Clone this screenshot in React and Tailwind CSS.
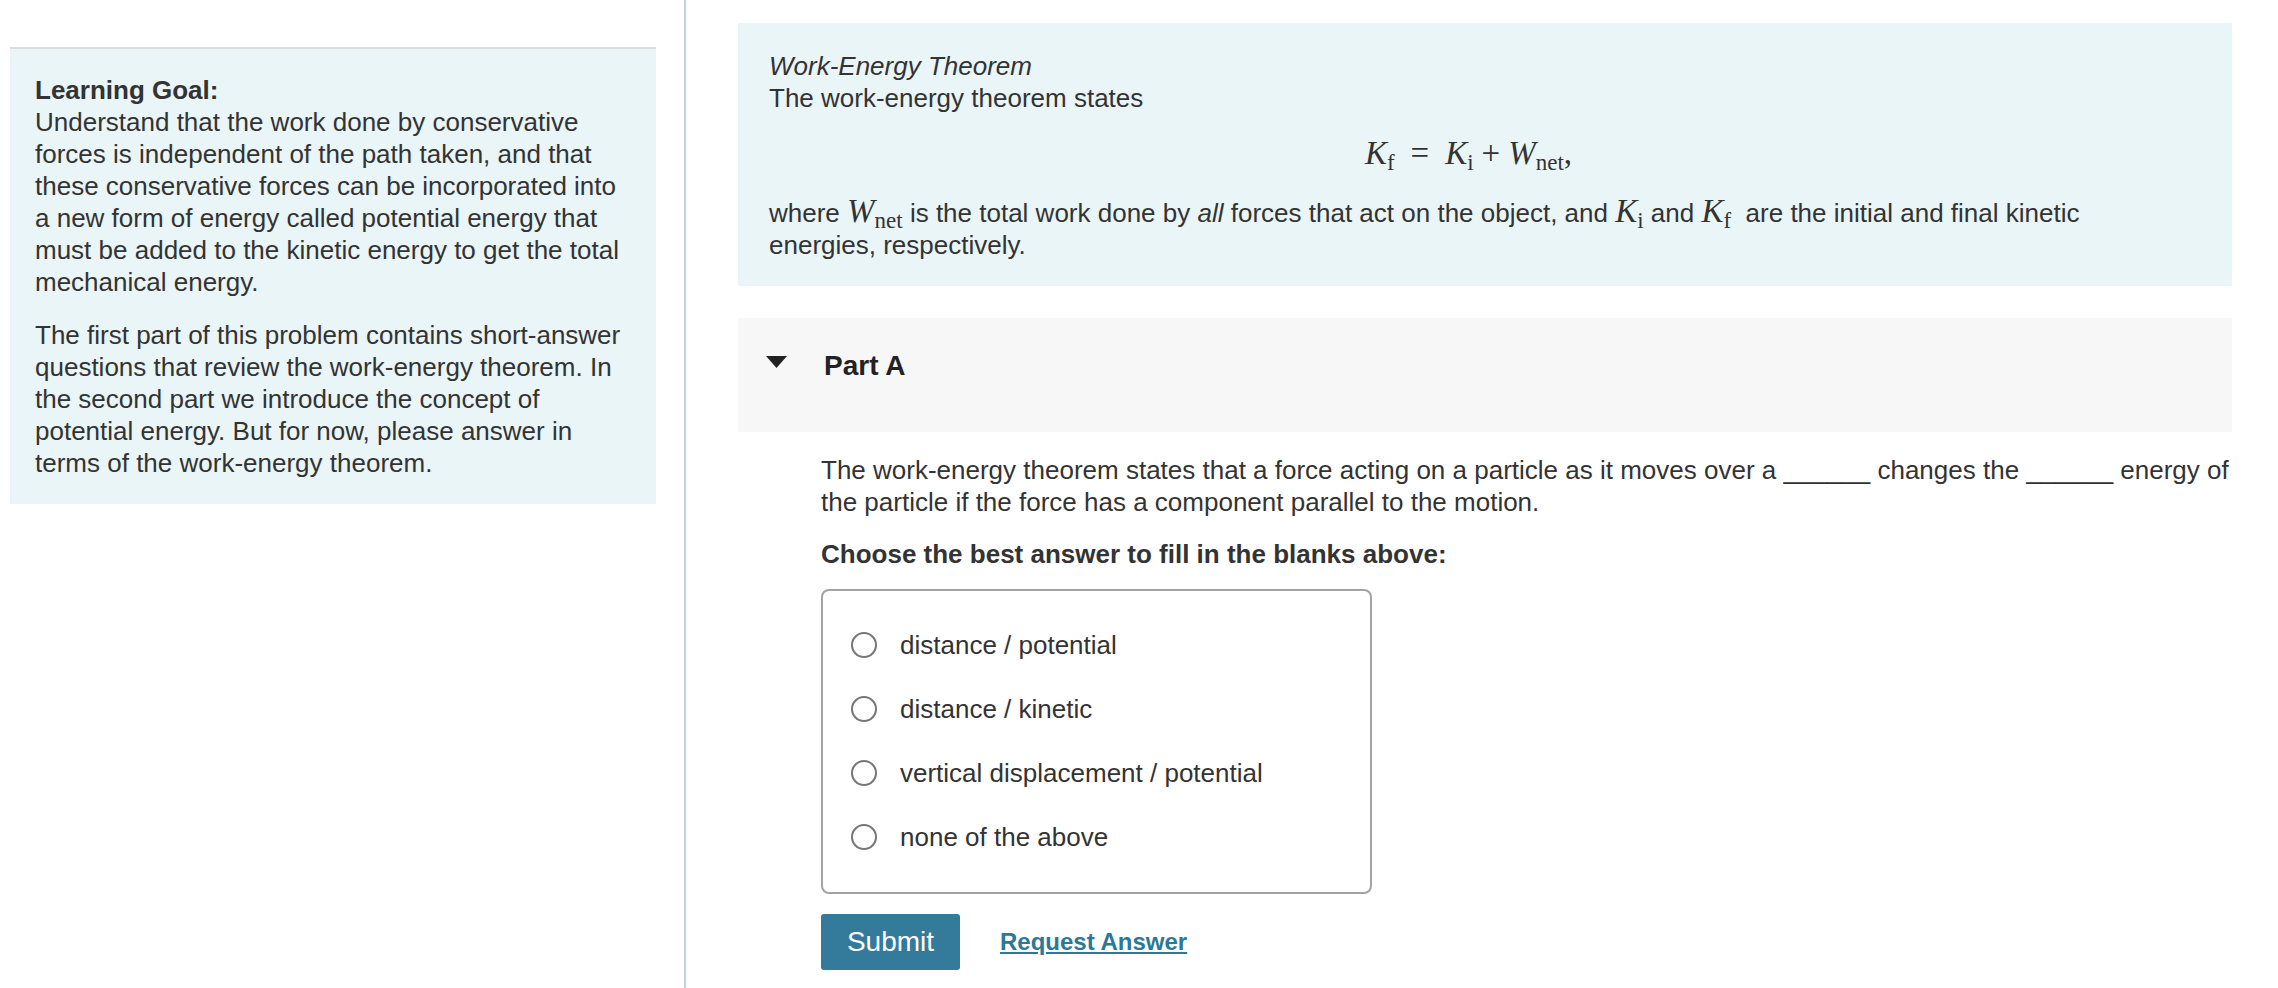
import React from "react";

const options = [
  "distance / potential",
  "distance / kinetic",
  "vertical displacement / potential",
  "none of the above",
];

// K with a roman subscript, KaTeX-ish
const Sym = ({ base, sub, inline }) => (
  <span
    className={
      "font-['Liberation_Serif','DejaVu_Serif',serif] text-[33px] whitespace-nowrap " +
      (inline ? "leading-[0]" : "leading-none")
    }
  >
    <i>{base}</i>
    <span className="relative top-[6px] text-[23px] not-italic">{sub}</span>
  </span>
);

const LearningGoal = () => (
  <aside className="w-[686px] shrink-0 border-r-2 border-[#c2d0e0] pl-[10px] pr-[28px] pt-[47px]">
    <div className="border-t-2 border-[#dcdcdc] bg-[#e9f5f7] px-[25px] pt-[25px] pb-[25px]">
      <p>
        <b>Learning Goal:</b>
        <br />
        Understand that the work done by conservative forces is independent of
        the path taken, and that these conservative forces can be incorporated
        into a new form of energy called potential energy that must be added to
        the kinetic energy to get the total mechanical energy.
      </p>
      <p className="mt-[21px]">
        The first part of this problem contains short-answer questions that
        review the work-energy theorem. In the second part we introduce the
        concept of potential energy. But for now, please answer in terms of the
        work-energy theorem.
      </p>
    </div>
  </aside>
);

const Theorem = () => (
  <div className="bg-[#e9f5f7] pl-[31px] pr-[64px] pt-[27px] pb-[25px]">
    <p className="italic">Work-Energy Theorem</p>
    <p>The work-energy theorem states</p>
    <div className="mt-[19px] mb-[24px] flex h-[40px] items-center justify-center gap-[16px] font-['Liberation_Serif','DejaVu_Serif',serif] text-[33px]">
      <Sym base="K" sub="f" />
      <span>=</span>
      <span className="flex items-center gap-[8px]">
        <Sym base="K" sub="i" />
        <span>+</span>
        <span>
          <Sym base="W" sub="net" />,
        </span>
      </span>
    </div>
    <p>
      where <Sym inline base="W" sub="net" /> is the total work done by{" "}
      <i>all</i> forces that act on the object, and{" "}
      <Sym inline base="K" sub="i" /> and <Sym inline base="K" sub="f" />
      &nbsp; are the initial and final kinetic energies, respectively.
    </p>
  </div>
);

const PartA = () => (
  <div>
    <div className="mt-[32px] flex h-[114px] items-start bg-[#f7f7f7] pl-[28px] pt-[32px]">
      <svg width="21" height="12" viewBox="0 0 21 12" className="mr-[37px] mt-[6px]">
        <polygon points="0,0 21,0 10.5,12" fill="#222" />
      </svg>
      <h3 className="text-[28px] font-bold text-[#222]">Part A</h3>
    </div>

    <div className="pl-[83px] pt-[22px]">
      <p className="mr-[-12px]">
        The work-energy theorem states that a force acting on a particle as it
        moves over a ______ changes the ______ energy of the particle if the
        force has a component parallel to the motion.
      </p>
      <p className="mt-[20px] font-bold">Choose the best answer to fill in the blanks above:</p>

      <div className="mt-[19px] w-[551px] rounded-[8px] border-2 border-[#a3a3a3] px-[28px] pt-[22px] pb-[23px]">
        {options.map((opt) => (
          <label key={opt} className="flex h-[64px] items-center gap-[23px]">
            <span className="h-[26px] w-[26px] shrink-0 rounded-full border-2 border-[#767676] bg-white" />
            <span>{opt}</span>
          </label>
        ))}
      </div>

      <div className="mt-[20px] flex items-center gap-[40px]">
        <button className="h-[56px] w-[139px] rounded-[3px] bg-[#337a9b] text-[28px] text-white">
          Submit
        </button>
        <a href="#" className="text-[24px] font-bold text-[#2b7898] underline">
          Request Answer
        </a>
      </div>
    </div>
  </div>
);

export default function App() {
  return (
    <div className="flex min-h-[988px] bg-white font-['Liberation_Sans',Arial,sans-serif] text-[26px] leading-[32px] text-[#333]">
      <LearningGoal />
      <main className="flex-1 pl-[52px] pr-[46px] pt-[23px]">
        <Theorem />
        <PartA />
      </main>
    </div>
  );
}
